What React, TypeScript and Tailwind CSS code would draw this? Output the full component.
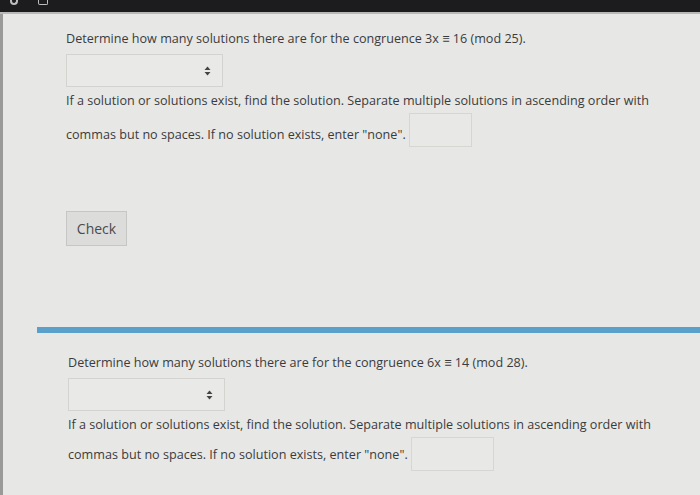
// Two congruence questions, each with a count dropdown and a solutions box
function CountSelect({ width }: { width: string }) {
  return (
    <div
      className={`${width} h-[33px] border border-[#d3d4d0] bg-[#e9eae7] flex items-center justify-end pr-[11px]`}
    >
      <SortArrows />
    </div>
  );
}

function SortArrows() {
  return (
    <svg width="7" height="10" viewBox="0 0 7 10" className="text-[#444]">
      <path d="M3.5 0.5 L6.5 4 L0.5 4 Z" fill="currentColor" />
      <path d="M3.5 9.5 L6.5 6 L0.5 6 Z" fill="currentColor" />
    </svg>
  );
}

function AnswerBox({ width, align }: { width: string; align: string }) {
  return (
    <span
      className={`inline-block ${width} h-[34px] ${align} border border-[#d6d7d3] bg-[#e8e9e6] ml-[3px]`}
    />
  );
}

function Question({
  a,
  b,
  m,
  selectW,
  boxW,
  boxAlign,
}: {
  a: string;
  b: string;
  m: string;
  selectW: string;
  boxW: string;
  boxAlign: string;
}) {
  return (
    <div>
      <div className="leading-[20px]">
        Determine how many solutions there are for the congruence {a}x ≡ {b} (mod {m}).
      </div>
      <div className="mt-[5px]">
        <CountSelect width={selectW} />
      </div>
      <div className="mt-[2px] leading-[24px]">
        If a solution or solutions exist, find the solution. Separate multiple solutions in
        ascending order with
        <br />
        commas but no spaces. If no solution exists, enter "none".
        <AnswerBox width={boxW} align={boxAlign} />
      </div>
    </div>
  );
}

export default function App() {
  return (
    <div
      className="w-[700px] h-[495px] overflow-hidden bg-[#e7e8e5] text-[#3b3b3d] text-[12.6px] flex flex-col"
      style={{ fontFamily: '"Open Sans", "Noto Sans", sans-serif' }}
    >
      {/* window chrome strip */}
      <div className="h-[12px] bg-[#1c1c1e] flex items-start gap-[20px] pl-[10px] shrink-0">
        <div className="w-[8px] h-[5px] rounded-b-full border-x-2 border-b-2 border-[#bdbdbd]" />
        <div className="w-[10px] h-[5px] border-x border-b border-[#bdbdbd] rounded-b-[2px]" />
      </div>
      <div className="h-[2px] bg-[#b9bab7] shrink-0" />

      <div className="flex flex-1">
        <div className="w-[3px] bg-[#9a9b99] shrink-0" />
        <div className="flex-1 flex flex-col">
          <div className="pl-[63px] pt-[15px]">
            <Question
              a="3"
              b="16"
              m="25"
              selectW="w-[157px]"
              boxW="w-[63px]"
              boxAlign="align-[-8px]"
            />
            <div className="mt-[64px]">
              <button className="w-[61px] h-[35px] border border-[#c6c7c4] bg-[#dcdddb] text-[14px] text-[#4a4a4e]">
                Check
              </button>
            </div>
          </div>

          <div className="mt-[81px] ml-[34px] h-[6px] bg-[#5b9fcb]" />

          <div className="pl-[65px] pt-[20px]">
            <Question
              a="6"
              b="14"
              m="28"
              selectW="w-[157px]"
              boxW="w-[83px]"
              boxAlign="align-[-12px]"
            />
          </div>
        </div>
      </div>
    </div>
  );
}
